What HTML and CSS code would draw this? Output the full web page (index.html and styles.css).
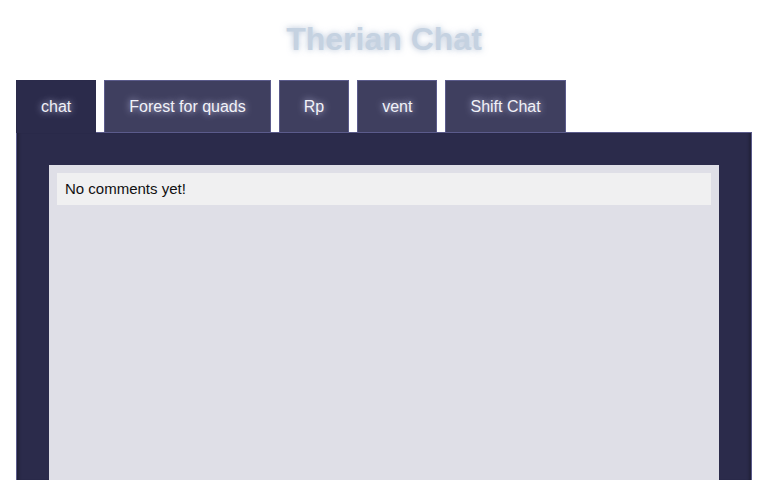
FILE: index.html
```html
<!DOCTYPE html>
<html lang="en">
<head>
<meta charset="utf-8">
<title>Therian Chat</title>
<link rel="stylesheet" href="styles.css">
</head>
<body>
  <header class="site-header">
    <h1 class="site-title">Therian Chat</h1>
  </header>
  <main class="board">
    <nav class="tabs">
      <a class="tab tab-active" href="#">chat</a>
      <a class="tab" href="#">Forest for quads</a>
      <a class="tab" href="#">Rp</a>
      <a class="tab" href="#">vent</a>
      <a class="tab" href="#">Shift Chat</a>
    </nav>
    <section class="panel">
      <div class="feed">
        <div class="comment-empty">No comments yet!</div>
      </div>
    </section>
  </main>
</body>
</html>
```

FILE: styles.css
```css
html, body {
  margin: 0;
  padding: 0;
  background: #ffffff;
  font-family: "Liberation Sans", Arial, sans-serif;
}

body {
  padding: 0 16px;
}

.site-header {
  height: 80px;
  display: flex;
  align-items: center;
  justify-content: center;
}

.site-title {
  margin: 0;
  font-size: 32px;
  font-weight: bold;
  line-height: 37px;
  color: #c5d2e1;
  text-shadow: 0 0 6px rgba(150, 170, 200, 0.7);
  position: relative;
  top: -1px;
}

.tabs {
  display: flex;
  gap: 8px;
}

.tab {
  display: block;
  height: 51px;
  line-height: 51px;
  padding: 0 24px;
  background: #3f3f5f;
  border: 1px solid #5b5b8b;
  border-bottom: none;
  color: #f2f2f8;
  font-size: 16px;
  text-decoration: none;
  text-shadow: 0 0 7px rgba(220, 220, 255, 0.9);
  margin-bottom: 1px;
}

.tab-active {
  background: #2b2b4b;
  border-color: #2b2b4b;
  height: 52px;
  margin-bottom: 0;
  position: relative;
  z-index: 1;
}

.panel {
  background: #2b2b4b;
  border: 1px solid #5b5b8b;
  border-bottom: none;
  margin-top: -1px;
  padding: 32px 32px 0;
  height: 315px;
  box-shadow: inset 4px 0 3px -2px rgba(0, 0, 0, 0.25), inset -4px 0 3px -2px rgba(0, 0, 0, 0.25);
}

.feed {
  background: #dfdfe7;
  padding: 8px;
  height: 100%;
  box-sizing: border-box;
}

.comment-empty {
  background: #f0f0f1;
  padding: 0 8px;
  height: 32px;
  line-height: 32px;
  font-size: 15px;
  color: #111111;
}
```
